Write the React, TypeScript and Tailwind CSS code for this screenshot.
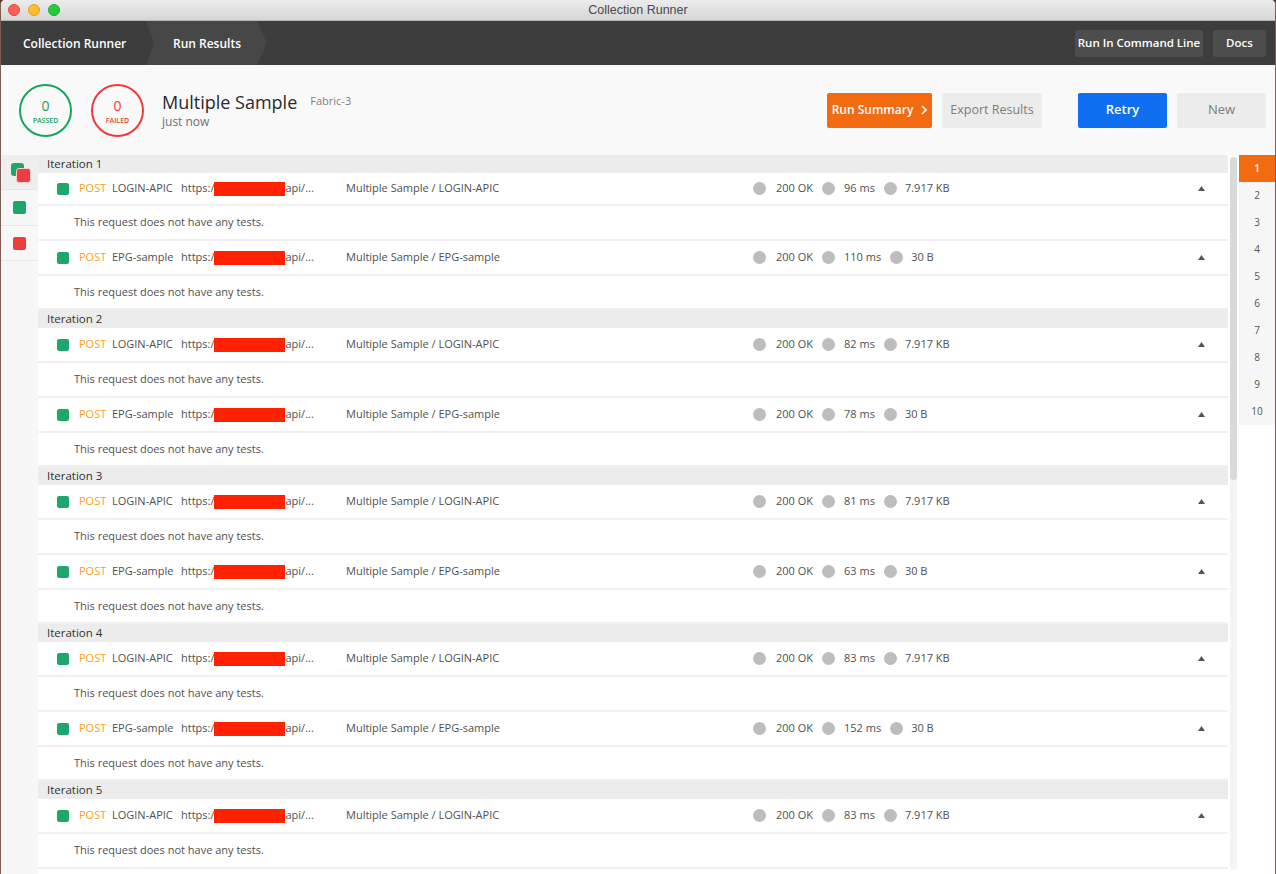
import React from "react";

type Req = { name: string; time: string; size: string };
const iterations: { n: number; reqs: Req[] }[] = [
  { n: 1, reqs: [{ name: "LOGIN-APIC", time: "96 ms", size: "7.917 KB" }, { name: "EPG-sample", time: "110 ms", size: "30 B" }] },
  { n: 2, reqs: [{ name: "LOGIN-APIC", time: "82 ms", size: "7.917 KB" }, { name: "EPG-sample", time: "78 ms", size: "30 B" }] },
  { n: 3, reqs: [{ name: "LOGIN-APIC", time: "81 ms", size: "7.917 KB" }, { name: "EPG-sample", time: "63 ms", size: "30 B" }] },
  { n: 4, reqs: [{ name: "LOGIN-APIC", time: "83 ms", size: "7.917 KB" }, { name: "EPG-sample", time: "152 ms", size: "30 B" }] },
  { n: 5, reqs: [{ name: "LOGIN-APIC", time: "83 ms", size: "7.917 KB" }] },
];

function Dot({ className = "" }: { className?: string }) {
  return <span className={`block w-[13px] h-[13px] rounded-full bg-[#bdbdbd] shrink-0 ${className}`} />;
}

function ReqRow({ r, h }: { r: Req; h: string }) {
  return (
    <div className={`flex items-center ${h} border-b-2 border-[#f0f0f0] bg-white pl-[19px] text-[11px] text-[#505050]`}>
      <span className="w-3 h-3 rounded-[2px] bg-[#1fa66b] shrink-0" />
      <span className="ml-[10px] w-[33px] text-[#f7a128]">POST</span>
      <span className="w-[69px]">{r.name}</span>
      <span className="w-[165px] flex items-center">
        <span>https:/</span>
        <span className="inline-block w-[71px] h-[14px] bg-[#ff2200]" />
        <span>api/...</span>
      </span>
      <span className="w-[407px]">Multiple Sample / {r.name}</span>
      <span className="flex items-center flex-1">
        <Dot />
        <span className="ml-[10px]">200 OK</span>
        <Dot className="ml-[9px]" />
        <span className="ml-[9px]">{r.time}</span>
        <Dot className="ml-[9px]" />
        <span className="ml-[8px]">{r.size}</span>
      </span>
      <span className="mr-[23px] flex items-center">
        <svg width="7" height="5" viewBox="0 0 7 5"><polygon points="3.5,0 7,5 0,5" fill="#555" /></svg>
      </span>
    </div>
  );
}

function TestRow({ h }: { h: string }) {
  return (
    <div className={`flex items-center ${h} border-b-2 border-[#f0f0f0] bg-white pl-[36px] text-[11px] text-[#505050]`}>
      This request does not have any tests.
    </div>
  );
}

export default function App() {
  return (
    <div className="w-[1276px] h-[874px] overflow-hidden bg-[#5e3a33] font-['Open_Sans','Noto_Sans',sans-serif]">
      <div className="w-full h-full flex flex-col bg-white rounded-t-[5px] overflow-hidden border-x border-[#7d5d55]">
        {/* title bar */}
        <div className="relative h-[21px] shrink-0 flex items-center justify-center bg-gradient-to-b from-[#ececec] to-[#d6d6d6] border-b border-[#b5b5b5]">
          <div className="absolute left-[7px] top-[4px] flex gap-[8px]">
            <span className="w-[12px] h-[12px] rounded-full bg-[#fc5f57] border border-[#e0443e]" />
            <span className="w-[12px] h-[12px] rounded-full bg-[#fdbc2e] border border-[#dea123]" />
            <span className="w-[12px] h-[12px] rounded-full bg-[#28c840] border border-[#1aab29]" />
          </div>
          <span className="text-[12.5px] text-[#4a4a4a] font-['Liberation_Sans',sans-serif]">Collection Runner</span>
        </div>
        {/* header */}
        <div className="h-[44px] shrink-0 flex items-center bg-[#3d3d3d] text-white text-[12px] font-semibold">
          <div className="w-[145px] h-full flex items-center pl-[22px] pt-[2px]">Collection Runner</div>
          <div className="w-[121px] h-full flex items-center pl-[27px] pt-[2px] bg-[#474747] [clip-path:polygon(0_0,111px_0,100%_50%,111px_100%,0_100%,8px_50%)]">Run Results</div>
          <div className="flex-1" />
          <div className="h-[27px] w-[128px] flex items-center justify-center rounded-[3px] bg-[#4d4d4d] text-[11.5px]">Run In Command Line</div>
          <div className="ml-[10px] mr-[9px] h-[27px] w-[53px] flex items-center justify-center rounded-[3px] bg-[#4d4d4d] text-[11.5px]">Docs</div>
        </div>
        {/* summary */}
        <div className="h-[90px] shrink-0 flex items-center bg-[#f9f9f9] pl-[18px] pr-[9px]">
          <div className="w-[53px] h-[53px] rounded-full border-2 border-[#18a45f] flex flex-col items-center justify-center text-[#18a45f]">
            <span className="text-[14px] leading-[16px] mt-[2px]">0</span>
            <span className="text-[7px] font-semibold leading-[9px] mt-[2px]">PASSED</span>
          </div>
          <div className="ml-[19px] w-[53px] h-[53px] rounded-full border-2 border-[#ec3b3b] flex flex-col items-center justify-center text-[#ec3b3b]">
            <span className="text-[14px] leading-[16px] mt-[2px]">0</span>
            <span className="text-[7px] font-semibold leading-[9px] mt-[2px]">FAILED</span>
          </div>
          <div className="ml-[18px] flex flex-col">
            <div className="flex items-center">
              <span className="text-[18px] leading-[22px] text-[#2a2a2a]">Multiple Sample</span>
              <span className="ml-[13px] text-[11px] text-[#808080]">Fabric-3</span>
            </div>
            <span className="text-[12px] leading-[16px] text-[#707070] mt-[1px]">just now</span>
          </div>
          <div className="flex-1" />
          <div className="h-[35px] w-[105px] flex items-center justify-center gap-[8px] rounded-[2px] bg-[#f26b10] text-white text-[12px] font-semibold">
            Run Summary
            <svg width="6" height="10" viewBox="0 0 6 10"><polyline points="1,1 5,5 1,9" fill="none" stroke="white" strokeWidth="1.6" /></svg>
          </div>
          <div className="ml-[10px] h-[35px] w-[100px] flex items-center justify-center rounded-[2px] bg-[#ececec] text-[#7c7c7c] text-[12.5px]">Export Results</div>
          <div className="ml-[36px] h-[35px] w-[89px] flex items-center justify-center rounded-[2px] bg-[#0f6ff0] text-white text-[13px] font-semibold">Retry</div>
          <div className="ml-[10px] h-[35px] w-[89px] flex items-center justify-center rounded-[2px] bg-[#ececec] text-[#7c7c7c] text-[13px]">New</div>
        </div>
        {/* main */}
        <div className="flex-1 flex min-h-0">
          <div className="w-[37px] shrink-0 bg-[#f7f7f7] flex flex-col">
            <div className="relative h-[35px] bg-[#eeeeee] border-b border-[#e6e6e6]">
              <span className="absolute left-[10px] top-[8px] w-[13px] h-[13px] rounded-[3px] bg-[#1fa66b]" />
              <span className="absolute left-[15px] top-[13px] w-[15px] h-[15px] rounded-[3px] bg-[#ee3d3d] border border-[#f6d0d0]" />
            </div>
            <div className="h-[36px] flex items-center justify-center border-b border-[#e6e6e6]">
              <span className="w-[13px] h-[13px] rounded-[2px] bg-[#1fa66b]" />
            </div>
            <div className="h-[35px] flex items-center justify-center border-b border-[#e6e6e6]">
              <span className="w-[13px] h-[13px] rounded-[2px] bg-[#ee3d3d]" />
            </div>
          </div>
          <div className="flex-1 flex flex-col overflow-hidden">
            {iterations.map((it, i) => {
              const hs = i === 0 ? ["h-[33px]", "h-[35px]", "h-[35px]", "h-[34px]"] : ["h-[35px]", "h-[35px]", "h-[35px]", "h-[34px]"];
              return (
                <div key={it.n} className="flex flex-col shrink-0">
                  <div className="h-[18px] flex items-center pl-[9px] bg-[#ececec] text-[11.5px] text-[#333]">Iteration {it.n}</div>
                  <ReqRow r={it.reqs[0]} h={hs[0]} />
                  <TestRow h={hs[1]} />
                  {it.reqs[1] && <ReqRow r={it.reqs[1]} h={hs[2]} />}
                  {it.reqs[1] && <TestRow h={hs[3]} />}
                </div>
              );
            })}
            <div className="flex-1 bg-white" />
          </div>
          <div className="w-[11px] shrink-0 bg-white flex justify-center pt-[2px] pb-[4px]">
            <div className="w-[7px] h-full rounded-full bg-[#f4f4f4] flex flex-col">
              <div className="h-[323px] rounded-full bg-[#d9d9d9]" />
            </div>
          </div>
          <div className="w-[36px] shrink-0 flex flex-col">
            <div className="bg-[#f6f6f6] flex flex-col">
              {Array.from({ length: 10 }, (_, k) => (
                <div key={k} className={k === 0 ? "h-[27px] flex items-center justify-center bg-[#f26b10] text-white text-[10px] font-semibold" : "h-[27px] flex items-center justify-center text-[#555] text-[10px]"}>
                  {k + 1}
                </div>
              ))}
            </div>
          </div>
        </div>
      </div>
    </div>
  );
}
